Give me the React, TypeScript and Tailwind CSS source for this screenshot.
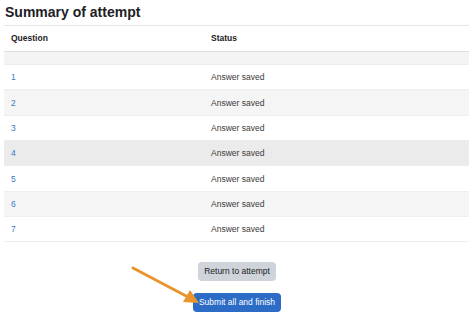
import React from "react";

const rows = [
  { n: "1", bg: "bg-white", h: "h-[25px]" },
  { n: "2", bg: "bg-[#f5f5f5]", h: "h-[26px]" },
  { n: "3", bg: "bg-white", h: "h-[25px]" },
  { n: "4", bg: "bg-[#ebebeb]", h: "h-[25px]" },
  { n: "5", bg: "bg-white", h: "h-[26px]" },
  { n: "6", bg: "bg-[#f5f5f5]", h: "h-[25px]" },
  { n: "7", bg: "bg-white", h: "h-[25px]" },
];

export default function App() {
  return (
    <div
      className="relative w-[474px] h-[323px] bg-white overflow-hidden text-[#1d2125]"
      style={{ fontFamily: '"Liberation Sans", Arial, sans-serif' }}
    >
      <div className="h-[25px] pl-[5px] pt-[4px] text-[14px] font-bold leading-[16px]">
        Summary of attempt
      </div>
      <div className="mx-[4px] w-[465px] border-t border-[#e4e6e8]">
        <div className="flex h-[26px] items-center border-b border-[#dcdfe2] text-[8.5px] font-bold">
          <div className="w-[207px] pl-[7px]">Question</div>
          <div>Status</div>
        </div>
        <div className="h-[13px] bg-[#f4f4f4] border-b border-[#ebedef]" />
        {rows.map((r) => (
          <div
            key={r.n}
            className={`flex items-center pt-[1px] ${r.h} ${r.bg} border-b border-[#eceef0] text-[8.5px]`}
          >
            <div className="w-[207px] pl-[7px] text-[#3d79c4]">{r.n}</div>
            <div className="text-[#3a3a3a]">Answer saved</div>
          </div>
        ))}
      </div>
      <div className="flex flex-col items-center mt-[20px] gap-[12px]">
        <div className="w-[78px] h-[19px] rounded-[4px] bg-[#ced4da] flex items-center justify-center text-[8.5px] text-[#1d2125]">
          Return to attempt
        </div>
        <div className="w-[88px] h-[19px] rounded-[4px] bg-[#2c6bc6] flex items-center justify-center text-[8.5px] text-white">
          Submit all and finish
        </div>
      </div>
      <svg
        className="absolute left-0 top-0"
        width="474"
        height="323"
        viewBox="0 0 474 323"
      >
        <line
          x1="133"
          y1="268"
          x2="188"
          y2="297"
          stroke="#e8962c"
          strokeWidth="3"
          strokeLinecap="round"
        />
        <polygon points="199,303 183,302 190,290" fill="#e8962c" />
      </svg>
    </div>
  );
}
